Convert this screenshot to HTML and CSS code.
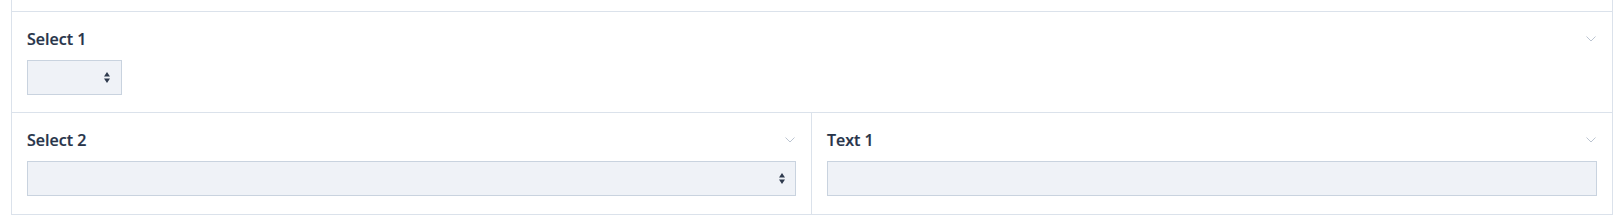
FILE: index.html
```html
<!DOCTYPE html>
<html lang="en">
<head>
    <meta charset="UTF-8">
    <meta name="viewport" content="width=device-width, initial-scale=1.0">
    <title>Form Layout</title>
    <link rel="stylesheet" href="styles.css">
</head>
<body>
    <div class="form-grid">
        <div class="form-row form-row-stub"></div>

        <div class="form-row">
            <div class="form-cell">
                <div class="cell-head">
                    <label for="select1">Select 1</label>
                    <svg class="chevron" width="10" height="6" viewBox="0 0 10 6"><path d="M0.5 0.5 L5 5 L9.5 0.5" fill="none" stroke="currentColor" stroke-width="1"/></svg>
                </div>
                <div class="select-wrap select-small">
                    <select id="select1"><option></option></select>
                    <svg class="spinner" width="6" height="11" viewBox="0 0 6 11"><path d="M3 0 L6 4.5 L0 4.5 Z M0 6.5 L6 6.5 L3 11 Z" fill="currentColor"/></svg>
                </div>
            </div>
        </div>

        <div class="form-row form-row-split">
            <div class="form-cell">
                <div class="cell-head">
                    <label for="select2">Select 2</label>
                    <svg class="chevron" width="10" height="6" viewBox="0 0 10 6"><path d="M0.5 0.5 L5 5 L9.5 0.5" fill="none" stroke="currentColor" stroke-width="1"/></svg>
                </div>
                <div class="select-wrap">
                    <select id="select2"><option></option></select>
                    <svg class="spinner" width="6" height="11" viewBox="0 0 6 11"><path d="M3 0 L6 4.5 L0 4.5 Z M0 6.5 L6 6.5 L3 11 Z" fill="currentColor"/></svg>
                </div>
            </div>
            <div class="form-cell">
                <div class="cell-head">
                    <label for="text1">Text 1</label>
                    <svg class="chevron" width="10" height="6" viewBox="0 0 10 6"><path d="M0.5 0.5 L5 5 L9.5 0.5" fill="none" stroke="currentColor" stroke-width="1"/></svg>
                </div>
                <input type="text" id="text1" class="text-input">
            </div>
        </div>
    </div>
</body>
</html>
```

FILE: styles.css
```css
body {
    margin: 0;
    font-family: "Open Sans", Arial, sans-serif;
    background: #fff;
}
.form-grid {
    margin: 0 11px;
    border-left: 1px solid #dbe2eb;
    border-right: 1px solid #dbe2eb;
}
.form-row {
    border-bottom: 1px solid #dbe2eb;
}
.form-row-stub {
    height: 11px;
}
.form-row-split {
    display: grid;
    grid-template-columns: 1fr 1fr;
}
.form-row-split .form-cell:first-child {
    border-right: 1px solid #dbe2eb;
}
.form-cell {
    padding: 16px 15px 17px;
}
.form-row:last-child .form-cell {
    padding-bottom: 18px;
}
.cell-head {
    display: flex;
    justify-content: space-between;
    align-items: center;
    height: 22px;
    margin-bottom: 10px;
}
.cell-head label {
    font-size: 16px;
    font-weight: 600;
    line-height: 22px;
    color: #27344a;
    -webkit-text-stroke: 0.2px #27344a;
}
.chevron {
    color: #bcc5d1;
    margin-right: 1px;
}
.select-wrap {
    position: relative;
}
.select-small {
    width: 95px;
}
.select-wrap select,
.text-input {
    display: block;
    width: 100%;
    height: 35px;
    box-sizing: border-box;
    margin: 0;
    padding: 0 8px;
    background: #eff2f7;
    border: 1px solid #c9d3df;
    border-radius: 0;
    font-family: inherit;
    font-size: 14px;
    -webkit-appearance: none;
    appearance: none;
}
.spinner {
    position: absolute;
    right: 11px;
    top: 12px;
    color: #2f3b4e;
    pointer-events: none;
}
.select-small .spinner {
    right: 12px;
}
```
